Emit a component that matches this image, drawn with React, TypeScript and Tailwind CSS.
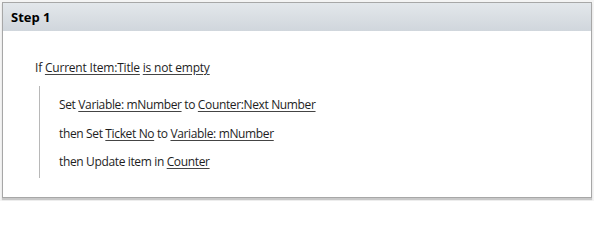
const Link = ({ children }: { children: React.ReactNode }) => (
	<span className="underline underline-offset-2 decoration-[#444] cursor-pointer">{children}</span>
);

export default function App() {
	return (
		<div className="w-[594px] h-[201px] bg-[#f4f4f4] pt-[2px] pl-[2px] pr-[2px]" style={{ fontFamily: '"Open Sans", "Noto Sans", sans-serif' }}>
			<div className="w-[590px] h-[196px] border border-[#a7a7a7] bg-white shadow-[0_2px_1px_rgba(0,0,0,0.18)] flex flex-col">
				{/* header */}
				<div className="h-[28px] shrink-0 bg-gradient-to-b from-[#e3e7eb] to-[#d0d6dc] flex items-center pl-[8px]">
					<span className="text-[13px] font-bold text-black leading-none">Step 1</span>
				</div>
				{/* body */}
				<div className="flex flex-col pl-[32px] pt-[29px] text-[12px] text-[#1e1e1e] leading-[16px]">
					<div className="whitespace-nowrap tracking-[-0.2px]">
						If <Link>Current Item:Title</Link> <Link>is not empty</Link>
					</div>
					<div className="ml-[4px] mt-[10px] border-l border-[#b8b8b8] h-[92px] flex flex-col justify-between pl-[19px] pt-[11px] pb-[8px] tracking-[-0.36px]">
						<div className="whitespace-nowrap">
							Set <Link>Variable: mNumber</Link> to <Link>Counter:Next Number</Link>
						</div>
						<div className="whitespace-nowrap">
							then Set <Link>Ticket No</Link> to <Link>Variable: mNumber</Link>
						</div>
						<div className="whitespace-nowrap">
							then Update item in <Link>Counter</Link>
						</div>
					</div>
				</div>
			</div>
		</div>
	);
}
